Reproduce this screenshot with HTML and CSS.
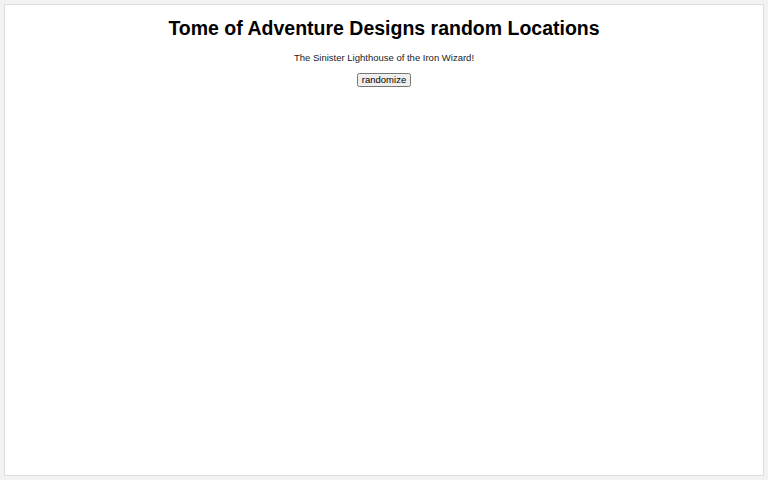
FILE: index.html
```html
<!DOCTYPE html>
<html>

<head lang="en">
    <meta charset="UTF-8">
    <title>Tome of Adventure Designs random Locations</title>
    <link rel="stylesheet" href="styles.css">
</head>

<body>
    <div class="page">
        <h1>Tome of Adventure Designs random Locations</h1>
        <p id="location">The Sinister Lighthouse of the Iron Wizard!</p>
        <button id="randomize">randomize</button>
    </div>
    <script type="text/javascript">
        var adjectives = ["Sinister", "Forgotten", "Sunken", "Burning", "Haunted", "Crystal"];
        var places = ["Lighthouse", "Tower", "Crypt", "Citadel", "Monastery", "Labyrinth"];
        var owners = ["Iron Wizard", "Mad King", "Serpent Queen", "Lich Lord", "Black Knight"];

        function pick(list) {
            return list[Math.floor(Math.random() * list.length)];
        }

        document.getElementById("randomize").onclick = function () {
            document.getElementById("location").innerHTML =
                "The " + pick(adjectives) + " " + pick(places) + " of the " + pick(owners) + "!";
        };
    </script>
</body>

</html>
```

FILE: styles.css
```css
html,
body {
    margin: 0;
    padding: 0;
}

body {
    background-color: #f2f2f2;
    font-family: "Liberation Sans", Arial, sans-serif;
    padding: 4px;
}

.page {
    background-color: #fff;
    border: 1px solid #dcdcdc;
    height: 470px;
    text-align: center;
}

.page h1 {
    font-size: 19.5px;
    line-height: 22px;
    margin: 12px 0 0 0;
    color: #000;
}

#location {
    font-size: 9.5px;
    line-height: 11px;
    color: #222;
    margin: 13px 0 6px 0;
}

#randomize {
    font-family: "Liberation Sans", Arial, sans-serif;
    font-size: 9.5px;
    line-height: 10px;
    height: 14px;
    padding: 0 3px;
}
```
